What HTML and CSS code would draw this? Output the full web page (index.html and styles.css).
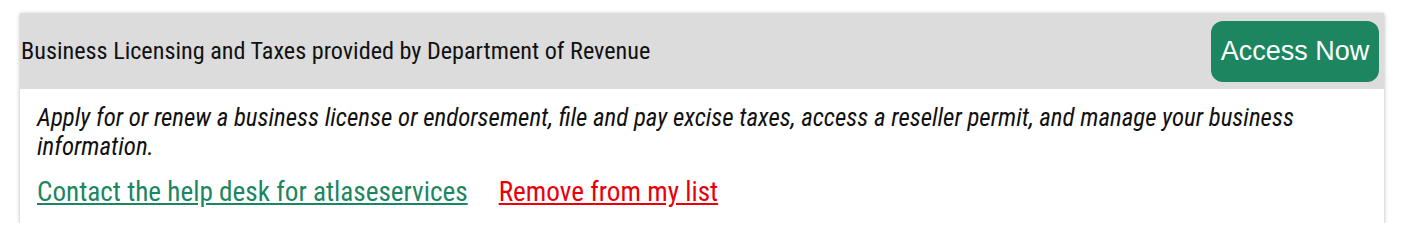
FILE: index.html
```html
<!DOCTYPE html>
<html lang="en">
<head>
<meta charset="utf-8">
<title>Business Licensing and Taxes</title>
<link rel="stylesheet" href="styles.css">
</head>
<body>
<div class="card">
  <div class="card-header">
    <span class="card-title">Business Licensing and Taxes provided by Department of Revenue</span>
    <a class="access-btn" href="#">Access Now</a>
  </div>
  <div class="card-body">
    <p class="desc">Apply for or renew a business license or endorsement, file and pay excise taxes, access a reseller permit, and manage your business information.</p>
    <div class="links">
      <a class="link-help" href="#">Contact the help desk for atlaseservices</a>
      <a class="link-remove" href="#">Remove from my list</a>
    </div>
  </div>
</div>
</body>
</html>
```
FILE: styles.css
```css
html, body {
  margin: 0;
  padding: 0;
  background: #ffffff;
}
body {
  font-family: Roboto, "Liberation Sans", sans-serif;
  font-stretch: condensed;
  color: #111;
}
.card {
  margin: 13px 24px 0 20px;
  background: #fff;
  box-shadow: 0 1px 4px rgba(0,0,0,0.3);
}
.card-header {
  background: #dcdcdc;
  height: 76px;
  display: flex;
  align-items: center;
  justify-content: space-between;
  padding: 0 5px 0 1px;
  box-sizing: border-box;
}
.card-title {
  font-size: 24.2px;
  color: #111;
}
.access-btn {
  display: flex;
  align-items: center;
  justify-content: center;
  width: 168px;
  height: 61px;
  border-radius: 12px;
  background: #1b8660;
  color: #fff;
  text-decoration: none;
  font-family: "Liberation Sans", Arial, sans-serif;
  font-stretch: normal;
  font-size: 27px;
}
.card-body {
  padding: 14px 16px 16px 17px;
}
.desc {
  margin: 0;
  font-style: italic;
  font-size: 24.9px;
  line-height: 29px;
  color: #111;
}
.links {
  display: flex;
  gap: 31px;
  margin-top: 16px;
}
.links a {
  font-size: 27.2px;
  line-height: 30px;
}
.link-help {
  color: #1b8660;
}
.link-remove {
  color: #e8000b;
}
```
